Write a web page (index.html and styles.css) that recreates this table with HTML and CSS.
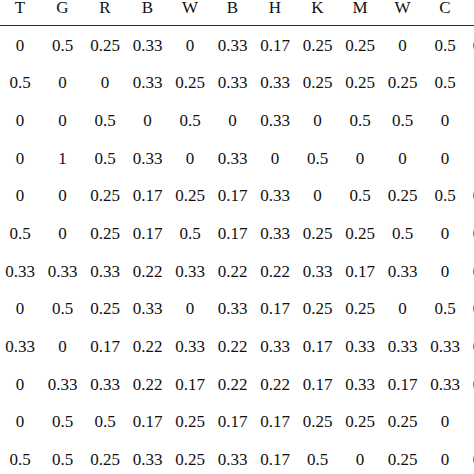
FILE: index.html
```html
<!DOCTYPE html>
<html lang="en">
<head>
<meta charset="utf-8">
<title>Matrix</title>
<link rel="stylesheet" href="styles.css">
</head>
<body>
<div class="matrix">
  <div class="row head"><span>T</span><span>G</span><span>R</span><span>B</span><span>W</span><span>B</span><span>H</span><span>K</span><span>M</span><span>W</span><span>C</span><span></span></div>
  <div class="rows">
    <div class="row"><span>0</span><span>0.5</span><span>0.25</span><span>0.33</span><span>0</span><span>0.33</span><span>0.17</span><span>0.25</span><span>0.25</span><span>0</span><span>0.5</span><span>0.33</span></div>
    <div class="row"><span>0.5</span><span>0</span><span>0</span><span>0.33</span><span>0.25</span><span>0.33</span><span>0.33</span><span>0.25</span><span>0.25</span><span>0.25</span><span>0.5</span><span>0</span></div>
    <div class="row"><span>0</span><span>0</span><span>0.5</span><span>0</span><span>0.5</span><span>0</span><span>0.33</span><span>0</span><span>0.5</span><span>0.5</span><span>0</span><span>0</span></div>
    <div class="row"><span>0</span><span>1</span><span>0.5</span><span>0.33</span><span>0</span><span>0.33</span><span>0</span><span>0.5</span><span>0</span><span>0</span><span>0</span><span>0</span></div>
    <div class="row"><span>0</span><span>0</span><span>0.25</span><span>0.17</span><span>0.25</span><span>0.17</span><span>0.33</span><span>0</span><span>0.5</span><span>0.25</span><span>0.5</span><span>0.25</span></div>
    <div class="row"><span>0.5</span><span>0</span><span>0.25</span><span>0.17</span><span>0.5</span><span>0.17</span><span>0.33</span><span>0.25</span><span>0.25</span><span>0.5</span><span>0</span><span>0.25</span></div>
    <div class="row"><span>0.33</span><span>0.33</span><span>0.33</span><span>0.22</span><span>0.33</span><span>0.22</span><span>0.22</span><span>0.33</span><span>0.17</span><span>0.33</span><span>0</span><span>0.22</span></div>
    <div class="row"><span>0</span><span>0.5</span><span>0.25</span><span>0.33</span><span>0</span><span>0.33</span><span>0.17</span><span>0.25</span><span>0.25</span><span>0</span><span>0.5</span><span>0.33</span></div>
    <div class="row"><span>0.33</span><span>0</span><span>0.17</span><span>0.22</span><span>0.33</span><span>0.22</span><span>0.33</span><span>0.17</span><span>0.33</span><span>0.33</span><span>0.33</span><span>0.22</span></div>
    <div class="row"><span>0</span><span>0.33</span><span>0.33</span><span>0.22</span><span>0.17</span><span>0.22</span><span>0.22</span><span>0.17</span><span>0.33</span><span>0.17</span><span>0.33</span><span>0.22</span></div>
    <div class="row"><span>0</span><span>0.5</span><span>0.5</span><span>0.17</span><span>0.25</span><span>0.17</span><span>0.17</span><span>0.25</span><span>0.25</span><span>0.25</span><span>0</span><span>0</span></div>
    <div class="row"><span>0.5</span><span>0.5</span><span>0.25</span><span>0.33</span><span>0.25</span><span>0.33</span><span>0.17</span><span>0.5</span><span>0</span><span>0.25</span><span>0</span><span>0.33</span></div>
  </div>
</div>
</body>
</html>
```

FILE: styles.css
```css
html, body {
  margin: 0;
  padding: 0;
  background: #ffffff;
  overflow: hidden;
}

body {
  width: 474px;
  height: 474px;
  font-family: "Liberation Serif", "Times New Roman", serif;
  font-size: 17px;
  color: #111111;
}

.matrix {
  margin-left: -1.25px;
  width: 510px;
}

.row {
  display: grid;
  grid-template-columns: repeat(12, 42.5px);
  text-align: center;
  white-space: nowrap;
}

.head {
  line-height: 16px;
  padding-bottom: 9px;
  border-bottom: 1px solid #2a2a2a;
}

.rows {
  padding-top: 0.5px;
}

.rows .row {
  height: 37.69px;
  line-height: 37.69px;
}
```
